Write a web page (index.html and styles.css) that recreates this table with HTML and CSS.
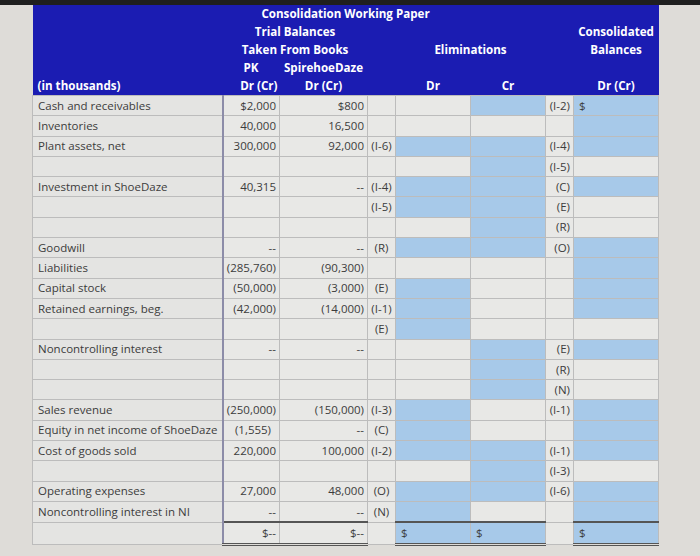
FILE: index.html
```html
<!DOCTYPE html>
<html>
<head>
<meta charset="utf-8">
<link rel="stylesheet" href="styles.css">
</head>
<body>
<div class="topbar"></div>
<div class="page">
<table class="wp">
<colgroup>
<col class="c-label"><col class="c-pk"><col class="c-sd"><col class="c-ref"><col class="c-dr"><col class="c-cr"><col class="c-ref"><col class="c-cons">
</colgroup>
<thead>
<tr><th colspan="8">Consolidation Working Paper</th></tr>
<tr><th></th><th colspan="2">Trial Balances</th><th colspan="4"></th><th>Consolidated</th></tr>
<tr><th></th><th colspan="2">Taken From Books</th><th></th><th colspan="2">Eliminations</th><th></th><th>Balances</th></tr>
<tr><th></th><th>PK</th><th>SpirehoeDaze</th><th colspan="5"></th></tr>
<tr><th class="hl">(in thousands)</th><th class="hr">Dr (Cr)</th><th>Dr (Cr)</th><th></th><th>Dr</th><th>Cr</th><th></th><th>Dr (Cr)</th></tr>
</thead>
<tbody>
<tr><td class="lbl">Cash and receivables</td><td class="num">$2,000</td><td class="num">$800</td><td class="ref"></td><td></td><td class="b"></td><td class="ref2">(I-2)</td><td class="b cur">$</td></tr>
<tr><td class="lbl">Inventories</td><td class="num">40,000</td><td class="num">16,500</td><td class="ref"></td><td></td><td></td><td class="ref2"></td><td class="b"></td></tr>
<tr><td class="lbl">Plant assets, net</td><td class="num">300,000</td><td class="num">92,000</td><td class="ref">(I-6)</td><td class="b"></td><td class="b"></td><td class="ref2">(I-4)</td><td class="b"></td></tr>
<tr><td class="lbl"></td><td class="num"></td><td class="num"></td><td class="ref"></td><td></td><td class="b"></td><td class="ref2">(I-5)</td><td></td></tr>
<tr><td class="lbl">Investment in ShoeDaze</td><td class="num">40,315</td><td class="num">--</td><td class="ref">(I-4)</td><td class="b"></td><td class="b"></td><td class="ref2">(C)</td><td class="b"></td></tr>
<tr><td class="lbl"></td><td class="num"></td><td class="num"></td><td class="ref">(I-5)</td><td class="b"></td><td class="b"></td><td class="ref2">(E)</td><td></td></tr>
<tr><td class="lbl"></td><td class="num"></td><td class="num"></td><td class="ref"></td><td></td><td class="b"></td><td class="ref2">(R)</td><td></td></tr>
<tr><td class="lbl">Goodwill</td><td class="num">--</td><td class="num">--</td><td class="ref">(R)</td><td class="b"></td><td class="b"></td><td class="ref2">(O)</td><td class="b"></td></tr>
<tr><td class="lbl">Liabilities</td><td class="num">(285,760)</td><td class="num">(90,300)</td><td class="ref"></td><td></td><td></td><td class="ref2"></td><td class="b"></td></tr>
<tr><td class="lbl">Capital stock</td><td class="num">(50,000)</td><td class="num">(3,000)</td><td class="ref">(E)</td><td class="b"></td><td></td><td class="ref2"></td><td class="b"></td></tr>
<tr><td class="lbl">Retained earnings, beg.</td><td class="num">(42,000)</td><td class="num">(14,000)</td><td class="ref">(I-1)</td><td class="b"></td><td></td><td class="ref2"></td><td class="b"></td></tr>
<tr><td class="lbl"></td><td class="num"></td><td class="num"></td><td class="ref">(E)</td><td class="b"></td><td></td><td class="ref2"></td><td></td></tr>
<tr><td class="lbl">Noncontrolling interest</td><td class="num">--</td><td class="num">--</td><td class="ref"></td><td></td><td class="b"></td><td class="ref2">(E)</td><td class="b"></td></tr>
<tr><td class="lbl"></td><td class="num"></td><td class="num"></td><td class="ref"></td><td></td><td class="b"></td><td class="ref2">(R)</td><td></td></tr>
<tr><td class="lbl"></td><td class="num"></td><td class="num"></td><td class="ref"></td><td></td><td class="b"></td><td class="ref2">(N)</td><td></td></tr>
<tr><td class="lbl">Sales revenue</td><td class="num">(250,000)</td><td class="num">(150,000)</td><td class="ref">(I-3)</td><td class="b"></td><td></td><td class="ref2">(I-1)</td><td class="b"></td></tr>
<tr><td class="lbl">Equity in net income of ShoeDaze</td><td class="num inset">(1,555)</td><td class="num">--</td><td class="ref">(C)</td><td class="b"></td><td></td><td class="ref2"></td><td class="b"></td></tr>
<tr><td class="lbl">Cost of goods sold</td><td class="num">220,000</td><td class="num">100,000</td><td class="ref">(I-2)</td><td class="b"></td><td class="b"></td><td class="ref2">(I-1)</td><td class="b"></td></tr>
<tr><td class="lbl"></td><td class="num"></td><td class="num"></td><td class="ref"></td><td></td><td class="b"></td><td class="ref2">(I-3)</td><td></td></tr>
<tr><td class="lbl">Operating expenses</td><td class="num">27,000</td><td class="num">48,000</td><td class="ref">(O)</td><td class="b"></td><td class="b"></td><td class="ref2">(I-6)</td><td class="b"></td></tr>
<tr><td class="lbl">Noncontrolling interest in NI</td><td class="num">--</td><td class="num">--</td><td class="ref">(N)</td><td class="b"></td><td></td><td class="ref2"></td><td class="b"></td></tr>
<tr class="tot"><td class="lbl"></td><td class="num sum">$--</td><td class="num sum">$--</td><td class="ref"></td><td class="b sum cur">$</td><td class="b sum cur">$</td><td class="ref2"></td><td class="b sum cur">$</td></tr>
</tbody>
</table>
</div>
</body>
</html>
```
FILE: styles.css
```css
html, body {
  margin: 0;
  padding: 0;
}
body {
  background: #dedcd8;
  font-family: "Open Sans", "Noto Sans", sans-serif;
  width: 700px;
  height: 556px;
  overflow: hidden;
}
.topbar {
  height: 5px;
  background: #1f1f1f;
}
.page {
  padding-left: 32px;
}
.wp {
  border-collapse: collapse;
  table-layout: fixed;
  width: 626px;
}
.c-label { width: 190px; }
.c-pk { width: 57px; }
.c-sd { width: 88px; }
.c-ref { width: 28px; }
.c-dr { width: 75px; }
.c-cr { width: 75px; }
.c-cons { width: 85px; }

.wp th {
  background: #1b1cb2;
  color: #ffffff;
  font-weight: 700;
  font-size: 11.6px;
  height: 18px;
  padding: 0;
  line-height: 18px;
  text-align: center;
  white-space: nowrap;
}
.wp th.hl {
  text-align: left;
  padding-left: 5px;
}
.wp th.hr {
  text-align: right;
  padding-right: 2px;
}
.wp td {
  height: 19.3px;
  border: 1px solid #bcbcbc;
  background: #e8e8e6;
  font-size: 11.5px;
  color: #3c3c3c;
  padding: 0 3px;
  line-height: 14px;
  white-space: nowrap;
  overflow: hidden;
}
.wp td.lbl {
  padding-left: 5px;
  border-right: 2px solid #8c8ca8;
  background: #e4e4e2;
}
.wp td.num {
  text-align: right;
  padding-right: 3px;
}
.wp td.num.inset {
  padding-right: 8px;
}
.wp td.ref {
  text-align: center;
  padding: 0;
}
.wp td.ref2 {
  text-align: right;
  padding-right: 3px;
}
.wp td.b {
  background: #a7c9e9;
}
.wp td.cur {
  text-align: left;
  padding-left: 5px;
}
.wp tr.tot td.sum {
  border-top: 2px solid #555555;
  border-bottom: 3px double #555555;
}
```
